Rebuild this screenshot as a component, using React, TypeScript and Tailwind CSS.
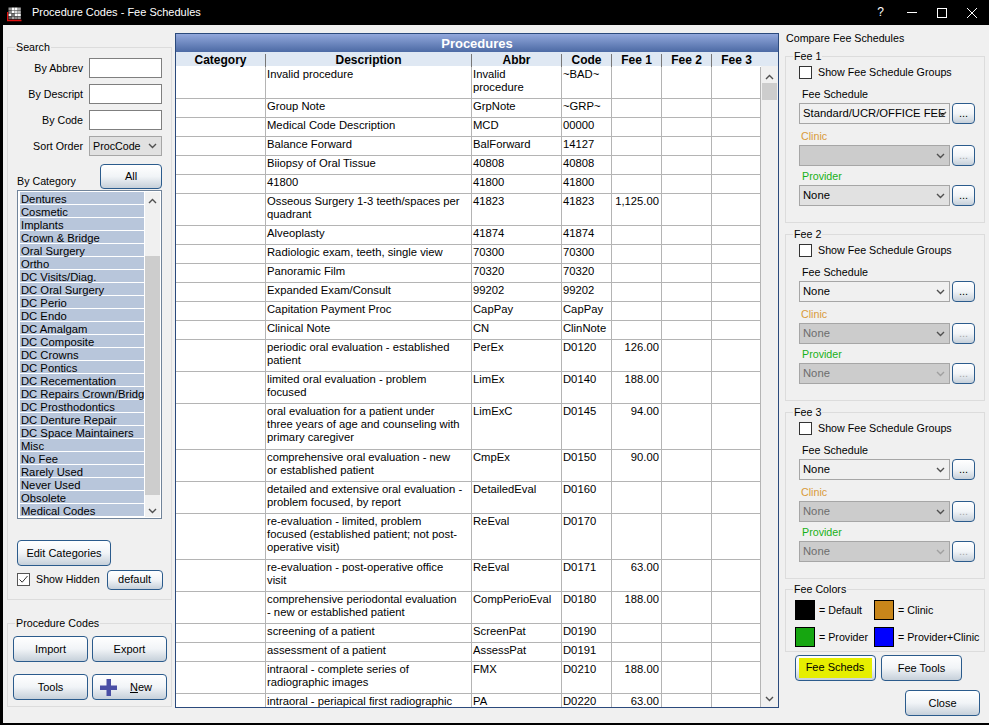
import type { ReactNode } from "react";

type Row = { desc: string; abbr: string; code: string; fee?: string };

const rows: Row[] = [
  { desc: "Invalid procedure\n ", abbr: "Invalid\nprocedure", code: "~BAD~" },
  { desc: "Group Note", abbr: "GrpNote", code: "~GRP~" },
  { desc: "Medical Code Description", abbr: "MCD", code: "00000" },
  { desc: "Balance Forward", abbr: "BalForward", code: "14127" },
  { desc: "Biiopsy of Oral Tissue", abbr: "40808", code: "40808" },
  { desc: "41800", abbr: "41800", code: "41800" },
  { desc: "Osseous Surgery 1-3 teeth/spaces per\nquadrant", abbr: "41823", code: "41823", fee: "1,125.00" },
  { desc: "Alveoplasty", abbr: "41874", code: "41874" },
  { desc: "Radiologic exam, teeth, single view", abbr: "70300", code: "70300" },
  { desc: "Panoramic Film", abbr: "70320", code: "70320" },
  { desc: "Expanded Exam/Consult", abbr: "99202", code: "99202" },
  { desc: "Capitation Payment Proc", abbr: "CapPay", code: "CapPay" },
  { desc: "Clinical Note", abbr: "CN", code: "ClinNote" },
  { desc: "periodic oral evaluation - established\npatient", abbr: "PerEx", code: "D0120", fee: "126.00" },
  { desc: "limited oral evaluation - problem\nfocused", abbr: "LimEx", code: "D0140", fee: "188.00" },
  { desc: "oral evaluation for a patient under\nthree years of age and counseling with\nprimary caregiver", abbr: "LimExC", code: "D0145", fee: "94.00" },
  { desc: "comprehensive oral evaluation - new\nor established patient", abbr: "CmpEx", code: "D0150", fee: "90.00" },
  { desc: "detailed and extensive oral evaluation -\nproblem focused, by report", abbr: "DetailedEval", code: "D0160" },
  { desc: "re-evaluation - limited, problem\nfocused (established patient; not post-\noperative visit)", abbr: "ReEval", code: "D0170" },
  { desc: "re-evaluation - post-operative office\nvisit", abbr: "ReEval", code: "D0171", fee: "63.00" },
  { desc: "comprehensive periodontal evaluation\n- new or established patient", abbr: "CompPerioEval", code: "D0180", fee: "188.00" },
  { desc: "screening of a patient", abbr: "ScreenPat", code: "D0190" },
  { desc: "assessment of a patient", abbr: "AssessPat", code: "D0191" },
  { desc: "intraoral - complete series of\nradiographic images", abbr: "FMX", code: "D0210", fee: "188.00" },
  { desc: "intraoral - periapical first radiographic", abbr: "PA", code: "D0220", fee: "63.00" },
];

const categories = [
  "Dentures", "Cosmetic", "Implants", "Crown & Bridge", "Oral Surgery", "Ortho",
  "DC Visits/Diag.", "DC Oral Surgery", "DC Perio", "DC Endo", "DC Amalgam",
  "DC Composite", "DC Crowns", "DC Pontics", "DC Recementation",
  "DC Repairs Crown/Bridge", "DC Prosthodontics", "DC Denture Repair",
  "DC Space Maintainers", "Misc", "No Fee", "Rarely Used", "Never Used",
  "Obsolete", "Medical Codes",
];

const headers = ["Category", "Description", "Abbr", "Code", "Fee 1", "Fee 2", "Fee 3"];
const columns = "grid grid-cols-[90px_206px_90px_50px_50px_50px_49px]";

function Chevron({ up = false, color = "#505050" }: { up?: boolean; color?: string }) {
  return (
    <svg width="9" height="6" viewBox="0 0 9 6" className="block shrink-0">
      <path
        d={up ? "M1 5L4.5 1.5L8 5" : "M1 1L4.5 4.5L8 1"}
        fill="none"
        stroke={color}
        strokeWidth="1.4"
      />
    </svg>
  );
}

function Btn({ className = "", children }: { className?: string; children: ReactNode }) {
  return (
    <button className={`flex items-center justify-center rounded-[4px] border border-[#2b5b8c] bg-linear-to-b from-white via-[#f1f4f7] to-[#c6d0da] text-[11px] text-black ${className}`}>
      {children}
    </button>
  );
}

function Group({ title, className = "", children }: { title: string; className?: string; children: ReactNode }) {
  return (
    <fieldset className={`border border-[#dcdcdc] ${className}`}>
      <legend className="ml-[7px] px-[1px] leading-[13px]">{title}</legend>
      {children}
    </fieldset>
  );
}

function Check({ checked = false }: { checked?: boolean }) {
  return (
    <span className={`flex h-[13px] w-[13px] shrink-0 items-center justify-center border bg-white ${checked ? "border-[#555] bg-[#f4f4f4]" : "border-[#333]"}`}>
      {checked && (
        <svg width="11" height="11" viewBox="0 0 11 11">
          <path d="M1.5 5.5L4.2 8.2L9.5 2" fill="none" stroke="#333" strokeWidth="1" />
        </svg>
      )}
    </span>
  );
}

function Combo({ value, tone }: { value: string; tone: "white" | "light" | "gray" | "off" }) {
  const look = {
    white: "bg-[#f0f0f0] text-black",
    light: "bg-[#e1e1e1] text-black",
    gray: "bg-[#cccccc] text-[#6d6d6d]",
    off: "bg-[#cccccc] text-[#6d6d6d]",
  }[tone];
  return (
    <div className={`flex h-[21px] w-[151px] items-center justify-between overflow-hidden border border-[#a6a6a6] pl-[3px] pr-[4px] text-[11.25px] ${look}`}>
      <span className="shrink-0 whitespace-nowrap">{value}</span>
      <div className="-ml-[8px]">
        <Chevron color={tone === "off" ? "#a0a0a0" : "#505050"} />
      </div>
    </div>
  );
}

function Dots({ off = false }: { off?: boolean }) {
  return (
    <Btn className="ml-[2px] h-[21px] w-[23px]">
      <span className={`leading-[13px] ${off ? "text-[#a8a8a8]" : "text-black"}`}>...</span>
    </Btn>
  );
}

function ComboRow({ value, tone, off }: { value: string; tone: "white" | "light" | "gray" | "off"; off?: boolean }) {
  return (
    <div className="mt-[2px] flex">
      <Combo value={value} tone={tone} />
      <Dots off={off} />
    </div>
  );
}

function FeeGroup({ title, first = false }: { title: string; first?: boolean }) {
  return (
    <Group title={title} className="h-[173px]">
      <div className="pl-[13px]">
        <div className="mt-[3px] flex h-[13px] items-center gap-[6px]">
          <Check />
          <span>Show Fee Schedule Groups</span>
        </div>
        <div className="ml-[3px] mt-[9px]">Fee Schedule</div>
        <ComboRow value={first ? "Standard/UCR/OFFICE FEE" : "None"} tone="white" />
        <div className="ml-[2px] mt-[6px] text-[#d99a3a]">Clinic</div>
        <ComboRow value={first ? "" : "None"} tone="gray" off />
        <div className="ml-[3px] mt-[4px] text-[#17b017]">Provider</div>
        {first ? <ComboRow value="None" tone="light" /> : <ComboRow value="None" tone="off" off />}
      </div>
    </Group>
  );
}

function Swatch({ color, label, borderless = false }: { color: string; label: string; borderless?: boolean }) {
  return (
    <div className="flex items-center gap-[4px]">
      <span className={`h-[20px] w-[20px] ${borderless ? "" : "border border-black"} ${color}`} />
      <span className="whitespace-nowrap">{label}</span>
    </div>
  );
}

function SearchField({ label }: { label: string }) {
  return (
    <div className="flex items-center justify-end gap-[6px]">
      <span>{label}</span>
      <input className="h-[20px] w-[73px] border border-[#7f7f7f] bg-white" />
    </div>
  );
}

function TitleIcon() {
  const cells = [
    "#999", "#fff", "#fff", "#aaa",
    "#888", "#fff", "#ddd", "#bbb",
    "#fff", "#777", "#fff", "#fff",
    "#666", "#aaa", "#888", "#999",
  ];
  return (
    <svg width="15" height="15" viewBox="0 0 15 15" className="block">
      {cells.map((c, i) => (
        <rect key={i} x={1.5 + (i % 4) * 3.1} y={0.5 + Math.floor(i / 4) * 3} width="3" height="2.7" fill={c} />
      ))}
      <path d="M0.5 5V13.5H14.5" fill="none" stroke="#e01010" strokeWidth="1.5" />
    </svg>
  );
}

function ProcedureTable() {
  return (
    <div className="flex h-[675px] w-[604px] flex-col border border-[#2b4a7c] bg-white">
      <div className="flex h-[18px] shrink-0 items-center justify-center bg-linear-to-b from-[#93a8dc] to-[#4c6aa4] text-[13px] font-bold text-white">
        Procedures
      </div>
      <div className={`${columns} h-[14px] shrink-0 bg-[#dfe8f3] pr-[17px] text-[12px] font-bold`}>
        {headers.map((h, i) => (
          <div key={h} className={`flex items-center justify-center pb-[3px] leading-[12px] ${i < 6 ? "my-[2px] border-r border-[#777]" : "my-[2px]"}`}>
            {h}
          </div>
        ))}
      </div>
      <div className="flex min-h-0 flex-1 text-[11.25px]">
        <div className="min-w-0 flex-1 overflow-hidden pt-[1px]">
          {rows.map((r, i) => {
            const tall = r.desc.split("\n").length === 3 ? "pb-[5px]" : "pb-[4px]";
            return (
              <div key={i} className={`${columns} border-b border-[#b4b4b4]`}>
                <div className="border-r border-[#b4b4b4]" />
                <div className={`whitespace-pre border-r border-[#b4b4b4] pl-[1px] pt-[1px] ${tall}`}>{r.desc}</div>
                <div className="whitespace-pre border-r border-[#b4b4b4] pl-[1px] pt-[1px]">{r.abbr}</div>
                <div className="border-r border-[#b4b4b4] pl-[1px] pt-[1px]">{r.code}</div>
                <div className="border-r border-[#b4b4b4] pr-[2px] pt-[1px] text-right">{r.fee}</div>
                <div className="border-r border-[#b4b4b4]" />
                <div className="border-r border-[#b4b4b4]" />
              </div>
            );
          })}
        </div>
        <div className="flex w-[17px] shrink-0 flex-col items-center bg-[#f0f0f0]">
          <div className="mt-[8px]"><Chevron up /></div>
          <div className="mt-[3px] h-[17px] w-[15px] bg-[#cdcdcd]" />
          <div className="mb-[5px] mt-auto"><Chevron /></div>
        </div>
      </div>
    </div>
  );
}

export default function App() {
  return (
    <div className="flex h-[725px] w-[989px] flex-col overflow-hidden bg-[#f0f0f0] font-['Liberation_Sans',sans-serif] text-[10.7px] leading-[13px] text-black">
      {/* Title bar */}
      <div className="flex h-[25px] shrink-0 items-center bg-black text-white">
        <div className="ml-[7px] mt-[4px]"><TitleIcon /></div>
        <span className="ml-[10px] text-[11px]">Procedure Codes - Fee Schedules</span>
        <span className="ml-auto text-[12px]">?</span>
        <svg width="10" height="2" viewBox="0 0 10 2" className="ml-[23px]"><rect width="10" height="1" fill="#fff" /></svg>
        <svg width="10" height="10" viewBox="0 0 10 10" className="ml-[20px]"><rect x="0.5" y="0.5" width="9" height="9" fill="none" stroke="#fff" /></svg>
        <svg width="10" height="10" viewBox="0 0 10 10" className="ml-[20px] mr-[12px]"><path d="M0 0L10 10M10 0L0 10" stroke="#fff" strokeWidth="1" /></svg>
      </div>

      <div className="flex min-h-0 flex-1 border-b-2 border-l-[3px] border-black">
        {/* Left panel */}
        <div className="ml-[4px] mt-[16px] w-[165px] shrink-0">
          <Group title="Search" className="h-[559px]">
            <div className="mt-[4px] flex flex-col gap-[6px] pr-[9px]">
              <SearchField label="By Abbrev" />
              <SearchField label="By Descript" />
              <SearchField label="By Code" />
              <div className="flex items-center justify-end gap-[6px]">
                <span>Sort Order</span>
                <div className="flex h-[20px] w-[73px] items-center justify-between border border-[#a6a6a6] bg-[#e1e1e1] pl-[3px] pr-[4px]">
                  <span>ProcCode</span>
                  <Chevron />
                </div>
              </div>
            </div>
            <div className="ml-[9px] mt-[8px] flex w-[145px] items-end justify-between">
              <span className="mb-[1px]">By Category</span>
              <Btn className="h-[25px] w-[62px]">All</Btn>
            </div>
            <div className="ml-[9px] mt-[1px] flex h-[329px] w-[145px] border border-[#71849a] bg-white py-[1px] pl-[2px] pr-[1px] text-[11.25px]">
              <div className="w-[124px]">
                {categories.map((c) => (
                  <div key={c} className="h-[13px] overflow-x-clip whitespace-nowrap border-b border-white bg-[#b8c6db] pl-[1px] leading-[14px]">
                    {c}
                  </div>
                ))}
              </div>
              <div className="ml-[1px] flex w-[15px] flex-col items-center bg-[#f0f0f0]">
                <div className="mt-[6px]"><Chevron up /></div>
                <div className="mt-[52px] h-[239px] w-[15px] bg-[#cdcdcd]" />
                <div className="mt-[13px]"><Chevron /></div>
              </div>
            </div>
            <Btn className="ml-[9px] mt-[21px] h-[26px] w-[94px]">Edit Categories</Btn>
            <div className="ml-[9px] mt-[3px] flex h-[21px] items-center">
              <Check checked />
              <span className="ml-[6px]">Show Hidden</span>
              <Btn className="ml-[7px] h-[20px] w-[56px]">default</Btn>
            </div>
          </Group>
          <Group title="Procedure Codes" className="mt-[17px] h-[90px]">
            <div className="mt-[6px] grid grid-cols-[75px_75px] gap-x-[4px] gap-y-[12px] pl-[5px]">
              <Btn className="h-[26px]">Import</Btn>
              <Btn className="h-[26px]">Export</Btn>
              <Btn className="h-[26px]">Tools</Btn>
              <Btn className="h-[26px]">
                <span className="flex w-full items-center justify-between pl-[7px] pr-[14px]">
                  <svg width="17" height="17" viewBox="0 0 17 17" className="block">
                    <path d="M6.5 0h4.5v6.5h6v4.5h-6v6H6.5v-6H0V6.5h6.5z" fill="#4a4fa5" />
                  </svg>
                  <span><span className="underline">N</span>ew</span>
                </span>
              </Btn>
            </div>
          </Group>
        </div>

        {/* Procedures grid */}
        <div className="ml-[3px] mt-[8px]">
          <ProcedureTable />
        </div>

        {/* Right panel */}
        <div className="ml-[6px] w-[200px] shrink-0">
          <div className="ml-[1px] mt-[7px]">Compare Fee Schedules</div>
          <div className="mt-[5px] flex flex-col gap-[5px]">
            <FeeGroup title="Fee 1" first />
            <FeeGroup title="Fee 2" />
            <FeeGroup title="Fee 3" />
          </div>
          <Group title="Fee Colors" className="mt-[4px] h-[69px]">
            <div className="mt-[4px] grid grid-cols-[79px_1fr] gap-y-[7px] pl-[9px]">
              <Swatch color="bg-black" label="= Default" borderless />
              <Swatch color="bg-[#c8861a]" label="= Clinic" />
              <Swatch color="bg-[#16a610]" label="= Provider" />
              <Swatch color="bg-[#0000ff]" label="= Provider+Clinic" />
            </div>
          </Group>
          <div className="ml-[10px] mt-[3px] flex gap-[5px]">
            <Btn className="h-[26px] w-[81px] p-[2px]">
              <span className="flex h-full w-[73px] items-center justify-center bg-[#e6ee00] pb-[1px] pr-[1px]">Fee Scheds</span>
            </Btn>
            <Btn className="h-[26px] w-[81px]">Fee Tools</Btn>
          </div>
          <div className="mt-[9px] flex justify-end pr-[5px]">
            <Btn className="h-[26px] w-[75px]">Close</Btn>
          </div>
        </div>
      </div>
    </div>
  );
}
